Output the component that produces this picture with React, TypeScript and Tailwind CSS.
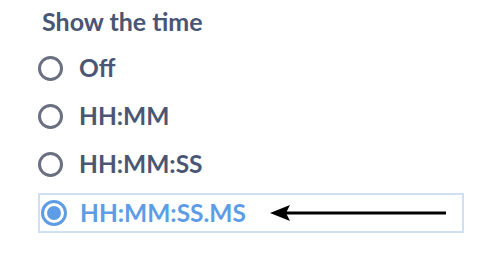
import { useState } from 'react';

const OPTIONS = ['Off', 'HH:MM', 'HH:MM:SS', 'HH:MM:SS.MS'];

export default function App() {
  const [value, setValue] = useState('HH:MM:SS.MS');

  return (
    <div className="w-[504px] h-[262px] bg-white pl-[38px] pt-[6px]" style={{ fontFamily: 'Lato, "Open Sans", sans-serif' }}>
      <div className="text-[25px] font-bold text-[#4a5573] leading-[30px] pl-[4px]">Show the time</div>
      <div className="flex flex-col mt-[12px] gap-[8px]">
        {OPTIONS.map(opt => {
          const selected = opt === value;
          return (
            <label
              key={opt}
              onClick={() => setValue(opt)}
              className={`flex items-center h-[40px] w-[426px] cursor-pointer ${selected ? 'mt-[1px] gap-[13px] border-2 border-[#cfe0f5] pl-[1px]' : 'gap-[16px]'}`}
            >
              {selected ? (
                <span className="w-[26px] h-[26px] rounded-full border-[3px] border-[#5e9de6] flex items-center justify-center shrink-0">
                  <span className="w-[14px] h-[14px] rounded-full bg-[#5e9de6]" />
                </span>
              ) : (
                <span className="w-[25px] h-[25px] rounded-full border-[3px] border-[#6b7080] shrink-0" />
              )}
              <span className={`text-[24.5px] font-bold leading-none ${selected ? 'text-[#5e9de6]' : 'text-[#4b5675]'}`}>{opt}</span>
              {selected && (
                <svg className="ml-auto mr-[14px]" width="178" height="20" viewBox="0 0 178 20">
                  <line x1="14" y1="10" x2="176" y2="10" stroke="#000" strokeWidth="3" />
                  <polygon points="0,10 20,2 16,10 20,18" fill="#000" />
                </svg>
              )}
            </label>
          );
        })}
      </div>
    </div>
  );
}
